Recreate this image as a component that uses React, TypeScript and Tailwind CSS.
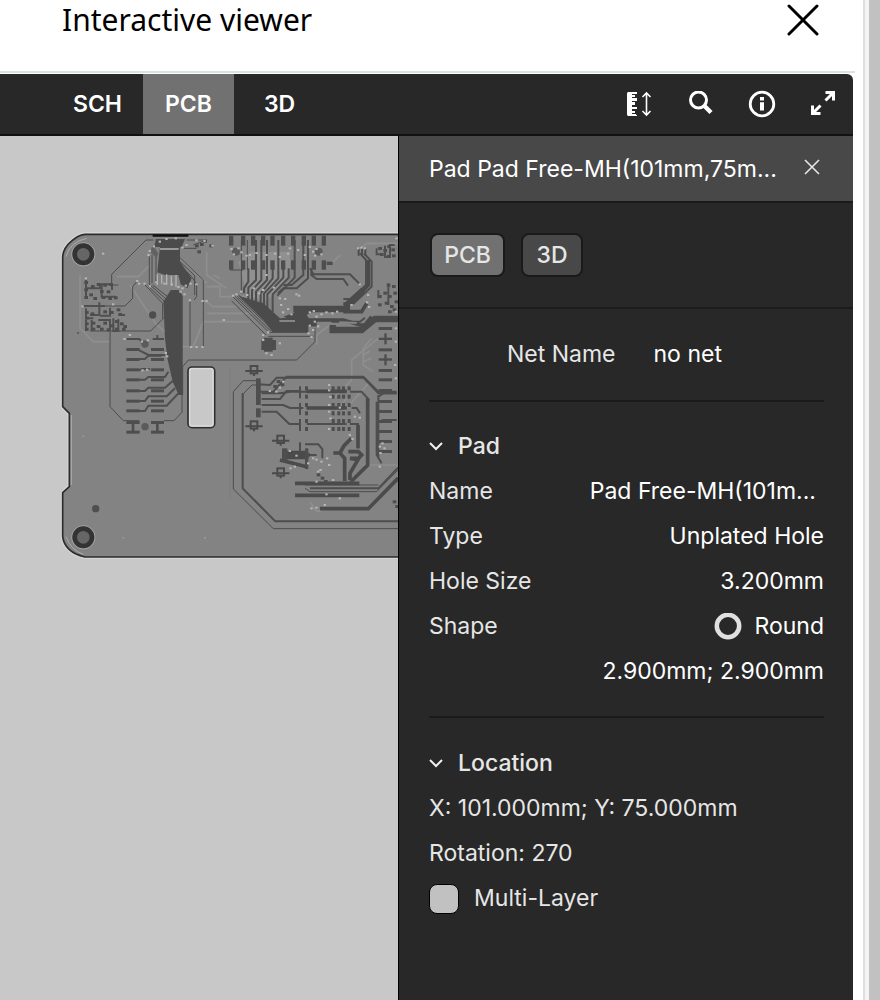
import type { ReactNode } from 'react';

type Point = [number, number];
type Box = [number, number, number, number];

const TABS = ['SCH', 'PCB', '3D'];

// Board units are a third of a pixel.
const THIN_TRACES = [
  'M310 45H288L185 148V180H205',
  'M262 168L248 185V220L225 243H165',
  'M120 318H302L345 275',
  'M180 320V545L220 587H268M342 587H372L396 562V500',
  'M298 95V180M306 90V175M318 95V170',
  'M285 180L338 235V280M293 182L342 228M300 180L348 222M308 180L354 216',
  'M380 110L425 155L440 178V215L432 225M384 104L434 152V210M388 96L460 165V365',
  'M420 228V365',
  'M398 510V425L415 405H740L795 350V310',
  'M410 45H460M395 70H440M430 60L470 45',
  'M548 215L655 320M553 212L662 318M560 212L668 314M566 210L676 310M545 228L648 330',
  'M655 322H775M655 334H790',
  'M550 792V500L580 467H625M578 792V508L606 480H625M550 792L670 911H1044',
  'M574 45V205M592 45V135M540 135H580',
  'M765 790L780 800H980L1044 735M765 780H985',
];

const TRACES = [
  'M578 504V790L676 889H1044',
  'M595 130V170L582 190V205M618 45V165L595 188V222M634 45V165L606 196V225M651 45V165L618 200V230M668 130V160L632 205V240M685 45V160L642 206V245M700 130V158L652 208V258M716 130V158L668 208V262M734 45V158L682 212',
  'M774 45V160L740 190H700L684 205M760 45V150L725 180H700M784 130V150L800 162H880L894 182M780 130L790 148H900L930 178',
  'M930 85L948 105V180L905 222H880M942 85L965 110V185L912 235H880',
  'M926 70V92M936 70V92M946 70V92',
  'M625 478L660 480L680 458H940L985 505H1040',
  'M625 500H670L710 455H940L985 500H1040',
  'M635 505H690L720 500H775M635 522H690L710 498H750M635 540H700L720 549H760M635 560H680L718 597H750',
  'M770 499H890M770 549H890M770 597H890M900 500H935L953 520V723L900 770M905 549H920L930 565M900 597H924V670',
  'M985 510V700M985 515L1000 505H1040M985 590L1000 585H1040M980 530V690L995 715',
  'M810 851H955L1044 758M780 790H985L1044 728',
  'M765 658H805L817 672V700M710 690H800',
  'M750 652V690',
  'M845 290H930L945 278',
  'M230 342H268L278 356M308 342H342M322 330V342',
  'M268 376L295 390H345M268 402H285L295 392H335',
  'M268 436L275 432H300M268 464H285L295 456H345L355 440',
  'M268 498H285L295 488H345L368 468M268 528H285L295 514H350L375 490M268 558H285L295 542H350L385 505',
];

const HEAVY_TRACES = [
  'M955 105V180L905 232',
  'M695 285H880L930 300H945L965 275',
  'M880 260H935L950 235',
  'M735 775H928M735 811H928',
  'M850 684H870L884 700V768M870 684L882 662L904 640M895 680H925L935 690L925 700H900L924 704L900 745V765',
  'M924 600V670',
  'M953 520V720L905 768',
  'M700 690H780M700 683H765M700 697H775M690 705L770 725',
  'M770 499H890M770 549H890',
  'M810 851H955L1044 760',
  'M625 468V540',
];

const BUSES = [
  'M730 252H900M885 245L940 195',
  'M690 295H800',
  'M848 300V315H935L975 282H1044',
];

const FAINT_TRACES = [
  'M200 155H265L300 120M240 180L320 300L345 320',
  'M470 185H510V215H620M460 225L490 245H560M470 265H650',
  'M390 365L430 365L460 290H600M380 90L470 175',
  'M985 340L905 405V465L850 520M965 340L940 370V410L965 400M960 378L940 390V420L970 440',
  'M90 150V310L130 350H180',
  'M470 80V150L530 190M490 150L510 160',
  'M930 70L950 55H1044M840 120L870 90',
  'M800 360V330L840 300M780 830L800 860L840 850',
  'M960 470L880 560M850 570L890 520M940 720H1044',
];

const CONNECTOR_X = [537, 573, 603, 633, 661, 693, 723, 755, 785, 815];

const PADS: Box[] = [
  ...CONNECTOR_X.map((x): Box => [x, 32, 13, 30]),
  ...CONNECTOR_X.map((x): Box => [x, 106, 13, 28]),
  ...[369, 399, 430, 460, 493, 524, 553].map((y): Box => [229, y, 40, 9]),
  ...[369, 399, 430, 460, 493, 524, 553].map((y): Box => [303, y, 39, 9]),
  ...[588, 617].map((y): Box => [229, y, 40, 9]),
  ...[588, 617].map((y): Box => [303, y, 39, 9]),
  [245, 596, 8, 22],
  [318, 596, 8, 22],
  ...[306, 370, 432, 460, 492, 525, 555, 585, 615, 645, 675].map((y): Box => [986, y, 40, 9]),
  [986, 338, 40, 7],
  [1003, 325, 7, 33],
  [986, 400, 40, 7],
  [1003, 388, 7, 33],
  [618, 460, 14, 80],
  [618, 550, 14, 27],
  [696, 670, 16, 40],
  [765, 670, 10, 62],
  [634, 345, 44, 30],
  [642, 338, 26, 42],
  [830, 110, 18, 10],
];

// Small two-pad parts in three rows.
const PART_COLUMNS = [765, 845, 862, 876, 893];
const PARTS: Point[] = [484, 509, 534, 559, 582, 606].flatMap((y) => PART_COLUMNS.map((x): Point => [x, y]));

const CHIPS: Point[] = [
  [103, 168], [123, 180], [140, 174], [160, 176], [178, 174], [103, 190], [118, 205],
  [103, 213], [130, 216], [150, 195], [155, 213], [175, 216], [192, 214], [170, 196],
  [105, 258], [122, 262], [160, 256], [180, 258], [200, 250], [205, 264], [105, 275],
  [105, 292], [125, 290], [140, 300], [160, 290], [178, 298], [195, 285], [210, 292],
  [220, 300], [105, 308], [125, 308], [150, 308], [170, 310], [195, 308], [216, 308],
  [435, 58], [450, 54], [478, 58], [442, 76], [460, 44],
  [985, 66], [1000, 72], [1012, 60], [1024, 70], [990, 84], [1010, 90], [1026, 88],
  [1010, 176], [1026, 180], [984, 210], [1000, 200], [1014, 210], [1030, 200],
  [984, 235], [1004, 230], [1020, 240], [1034, 226], [1014, 256], [1028, 250],
  [800, 745], [812, 755], [822, 765], [1028, 826], [1036, 840], [680, 465], [670, 480], [692, 475],
];

const CHIP_LINES =
  'M108 165V190H150V178H186V195M155 180V215H195V222M108 195V220M100 243H165M148 232V270H120M180 248V272H150M108 250V280H130M108 285V318M125 285V318M145 285H180V318M190 280V318H205V282M210 270H225M980 70V88H1000M1005 62V96H1020V60H1034M985 195V220M1015 175V240';

const TEST_POINTS: Point[] = [[612, 435], [612, 601], [692, 644], [692, 742]];

const VIAS: Point[] = [
  [160, 86], [296, 90], [300, 78], [312, 64], [108, 160], [98, 244], [190, 238], [262, 168], [268, 176],
  [284, 176], [300, 184], [320, 172], [344, 176], [366, 178], [386, 186], [398, 190], [408, 182], [422, 176],
  [392, 200], [404, 208], [440, 178], [420, 226], [458, 228], [470, 228], [424, 366], [440, 366], [458, 366],
  [398, 68], [410, 60], [440, 46], [464, 48], [488, 62], [350, 42], [330, 50], [378, 40], [224, 342],
  [240, 330], [276, 350], [294, 346], [278, 436], [292, 434], [348, 384], [352, 394], [522, 285],
  [545, 72], [552, 88], [566, 70], [575, 82], [590, 92], [550, 212], [560, 208], [574, 200], [592, 210],
  [612, 190], [628, 205], [640, 195], [600, 90], [620, 84], [650, 90], [676, 86], [690, 96], [715, 86],
  [720, 70], [745, 75], [765, 90], [790, 80], [800, 72], [815, 88], [796, 92], [780, 66], [650, 150],
  [672, 188], [690, 220], [694, 240], [700, 262], [715, 252], [725, 268], [748, 212], [740, 208], [706, 222],
  [925, 70], [935, 68], [945, 70], [930, 178], [905, 240], [955, 210], [952, 232], [958, 246],
  [780, 262], [792, 258], [800, 275], [815, 268], [830, 262], [848, 265], [862, 260], [795, 290],
  [780, 302], [790, 315], [776, 325], [785, 336], [805, 304], [640, 330], [655, 322], [650, 385],
  [665, 390], [640, 345], [690, 355], [660, 498], [680, 500], [690, 488], [700, 470], [838, 480], [838, 496],
  [842, 516], [838, 540], [838, 560], [842, 580], [838, 612], [870, 548], [915, 575], [930, 578], [900, 630],
  [908, 642], [720, 678], [740, 692], [722, 730], [735, 725], [775, 715], [790, 700], [800, 704], [815, 710],
  [832, 700], [838, 720], [805, 740], [812, 735], [800, 770], [850, 765], [870, 820], [830, 808], [785, 850],
  [800, 848], [825, 840], [990, 725], [998, 655], [1004, 670], [992, 684], [990, 665], [1040, 40],
  [1038, 260], [1038, 310], [1038, 350], [1036, 420], [1038, 460],
];

function BoardDrawing() {
  return (
    <svg
      viewBox="30 21 1014 984"
      className="mt-24 ml-[60px] h-[328px] w-[338px] shrink-0"
      fill="none"
      role="img"
      aria-label="PCB layout"
    >
      <path
        d="M1060 28H105Q88 28 66 47Q38 70 38 98V545L58 565V785L38 803V935Q44 982 105 996H1060Z"
        fill="#838383"
        stroke="#d6d6d6"
        strokeWidth="12"
      />
      <path
        d="M1060 28H105Q88 28 66 47Q38 70 38 98V545L58 565V785L38 803V935Q44 982 105 996H1060Z"
        fill="#838383"
        stroke="#2c2c2c"
        strokeWidth="5"
      />
      <path d="M64 570V780M110 40Q60 50 48 95M48 935Q62 975 100 988" stroke="#adadad" strokeWidth="3" />
      <path d="M308 32H415" stroke="#111" strokeWidth="7" />

      <path d="M540 430V820" stroke="#7b7b7b" strokeWidth="3" />
      <g stroke="#8f8f8f" strokeWidth="5">
        {FAINT_TRACES.map((d) => (
          <path key={d} d={d} />
        ))}
      </g>
      <path d="M565 110L605 80L720 80V150L670 210L640 230L590 205Z" fill="#9a9a9a" opacity="0.6" />

      <g stroke="#4c4c4c" strokeWidth="3">
        {THIN_TRACES.map((d) => (
          <path key={d} d={d} />
        ))}
      </g>
      <g stroke="#4e4e4e" strokeWidth="6">
        {TRACES.map((d) => (
          <path key={d} d={d} />
        ))}
      </g>
      <g stroke="#4b4b4b" strokeWidth="11">
        {HEAVY_TRACES.map((d) => (
          <path key={d} d={d} />
        ))}
      </g>
      <g stroke="#4b4b4b" strokeWidth="19">
        {BUSES.map((d) => (
          <path key={d} d={d} />
        ))}
      </g>

      {/* ribbon bundles that read as solid copper */}
      <g fill="#4b4b4b">
        <path d="M330 65H390V110L425 160L412 190L392 178L385 150H345L322 142Z" />
        <path d="M318 42H405L395 66H312Z" />
        <path d="M340 230L362 195H386L398 212V510H386L368 470L352 400L345 340Z" />
        <path d="M565 212L640 235L690 280H740V292H775V322H668L640 285Z" />
        <path d="M730 245H860V262L790 258L770 270L780 285H725L700 275L735 262Z" />
      </g>
      <path d="M308 60L325 85L320 100L300 80Z" fill="#626262" />
      <path
        d="M322 148V180M335 150V176M350 148V180M364 152V182M378 150V186M330 72H386"
        stroke="#b4b4b4"
        strokeWidth="4"
      />
      <path d="M688 288H735M785 270L845 266M868 292L920 294" stroke="#858585" strokeWidth="6" />

      <path d={CHIP_LINES} stroke="#505050" strokeWidth="6" />
      <g fill="#4e4e4e">
        {PADS.map(([x, y, w, h]) => (
          <rect key={`${x}-${y}`} x={x} y={y} width={w} height={h} />
        ))}
        {PARTS.map(([x, y]) => (
          <rect key={`${x}-${y}`} x={x} y={y} width="9" height="12" />
        ))}
        {[484, 534, 582].map((y) => (
          <rect key={y} x="747" y={y} width="6" height="36" />
        ))}
        {CHIPS.map(([x, y]) => (
          <rect key={`${x}-${y}`} x={x} y={y} width="11" height="9" />
        ))}
        <circle cx="308" cy="270" r="11" />
        <circle cx="137" cy="851" r="11" />
        <circle cx="84" cy="324" r="3" />
      </g>
      <circle cx="285" cy="357" r="11" fill="#5b5b5b" />
      <circle cx="285" cy="605" r="11" fill="#5b5b5b" />
      <circle cx="558" cy="80" r="12" fill="#5b5b5b" />
      <circle cx="806" cy="80" r="12" fill="#5b5b5b" />

      <g stroke="#4a4a4a" strokeWidth="6">
        {TEST_POINTS.map(([x, y]) => (
          <g key={`${x}-${y}`}>
            <rect x={x - 10} y={y - 12} width="20" height="22" />
            <path d={`M${x - 26} ${y + 3}H${x + 26}M${x} ${y + 10}V${y + 18}`} />
          </g>
        ))}
      </g>

      <g fill="#b6b6b6">
        {VIAS.map(([x, y]) => (
          <rect key={`${x}-${y}`} x={x - 4} y={y - 3} width="7" height="6" />
        ))}
      </g>
      <g fill="#9c9c9c">
        <circle cx="100" cy="634" r="3" />
        <circle cx="220" cy="938" r="3" />
        <circle cx="465" cy="938" r="3" />
      </g>

      <rect x="414" y="426" width="80" height="182" rx="12" fill="#c8c8c8" stroke="#303030" strokeWidth="5" />
      <rect x="419" y="431" width="70" height="172" rx="8" stroke="#dadada" strokeWidth="4" />

      {[88, 937].map((cy) => (
        <g key={cy}>
          <circle cx="100" cy={cy} r="35" stroke="#a5a5a5" strokeWidth="3" />
          <circle cx="100" cy={cy} r="26" fill="#666" stroke="#333" strokeWidth="14" />
        </g>
      ))}
    </svg>
  );
}

function RulerIcon() {
  return (
    <svg width="26" height="26" viewBox="0 0 26 26" fill="none">
      <path d="M2 1H11V2H6V4H9V6H6V8H11V10H6V12H9V14H6V16H11V18H6V20H9V22H6V24H11V25H2L1 24V2Z" fill="#fff" />
      <path d="M5 1H11V3H5ZM5 7H11V9H5ZM5 11H9V13H5ZM5 16H11V18H5ZM5 23H10V25H5Z" fill="#fff" />
      <path d="M20.5 2V24M16.5 6L20.5 2L24.5 6M16.5 20L20.5 24L24.5 20" stroke="#fff" strokeWidth="1.6" />
    </svg>
  );
}

function SearchIcon() {
  return (
    <svg width="26" height="26" viewBox="0 0 26 26" fill="none" stroke="#fff">
      <circle cx="11.5" cy="9" r="8" strokeWidth="3" />
      <path d="M17 14.5L24 21.5" strokeWidth="4.4" />
    </svg>
  );
}

function InfoIcon() {
  return (
    <svg width="28" height="28" viewBox="0 0 28 28" fill="none">
      <circle cx="14" cy="14" r="11.8" stroke="#fff" strokeWidth="2.8" />
      <path d="M12 7H16V10.4H12ZM12 12.2H16V20.6H12Z" fill="#fff" />
    </svg>
  );
}

function ExpandIcon() {
  return (
    <svg width="26" height="26" viewBox="0 0 26 26" fill="none" stroke="#fff" strokeWidth="3">
      <path d="M14.5 1.5H22.5V9.5M22 2L14.5 9.5M1.5 14.5V22.5H9.5M2 22L9.5 14.5" />
    </svg>
  );
}

function Row({ label, children }: { label?: string; children: ReactNode }) {
  return (
    <div className="flex h-[45px] items-center justify-between">
      <dt>{label}</dt>
      <dd className="flex items-center text-white">{children}</dd>
    </div>
  );
}

function SectionTitle({ children }: { children: ReactNode }) {
  return (
    <h3 className="h-[45px] font-medium">
      <button className="flex h-full items-center gap-[15px]" aria-expanded="true">
        <svg width="14" height="10" viewBox="0 0 14 10" fill="none" stroke="#f0f0f0" strokeWidth="2">
          <path d="M1 1L7 7L13 1" />
        </svg>
        {children}
      </button>
    </h3>
  );
}

function DetailsPanel() {
  return (
    <aside className="flex w-[455px] shrink-0 flex-col border-l border-black bg-[#282828] text-[23px] text-[#e6e6e6]">
      <header className="flex h-[67px] items-center justify-between border-b-2 border-[#1a1a1a] bg-[#484848] pr-[33px] pl-[30px]">
        <h2 className="pt-0.5 whitespace-nowrap text-white">Pad Pad Free-MH(101mm,75m...</h2>
        <button aria-label="Close panel" className="pb-1">
          <svg width="16" height="16" viewBox="0 0 16 16" stroke="#e6e6e6" strokeWidth="1.6">
            <path d="M1 1L15 15M15 1L1 15" />
          </svg>
        </button>
      </header>

      <div className="flex h-[106px] items-center gap-4 border-b-2 border-[#1c1c1c] px-[31px] font-medium">
        <button className="h-11 w-[75px] rounded-lg border-2 border-[#1a1a1a] bg-[#717171]">PCB</button>
        <button className="h-11 w-[62px] rounded-lg border-2 border-[#1a1a1a] bg-[#484848]">3D</button>
      </div>

      <div className="pr-[29px] pl-[30px]">
        <dl className="flex h-[91px] items-center gap-[38px] pl-[78px]">
          <dt>Net Name</dt>
          <dd className="text-white">no net</dd>
        </dl>

        <section className="border-y-2 border-[#1a1a1a] py-[22px]">
          <SectionTitle>Pad</SectionTitle>
          <dl>
            <Row label="Name">
              <span className="pr-2 whitespace-nowrap">Pad Free-MH(101m...</span>
            </Row>
            <Row label="Type">Unplated Hole</Row>
            <Row label="Hole Size">3.200mm</Row>
            <Row label="Shape">
              <svg className="mr-3" width="28" height="28" viewBox="0 0 28 28" fill="none">
                <circle cx="14" cy="13" r="11.2" stroke="#e0e0e0" strokeWidth="4.5" />
              </svg>
              Round
            </Row>
            <Row>2.900mm; 2.900mm</Row>
          </dl>
        </section>

        <section className="pt-[23px]">
          <SectionTitle>Location</SectionTitle>
          <p className="flex h-[45px] items-center">X: 101.000mm; Y: 75.000mm</p>
          <p className="flex h-[45px] items-center">Rotation: 270</p>
          <p className="flex h-[45px] items-center gap-[15px]">
            <span className="size-[30px] rounded-lg border border-black bg-[#c1c1c1]" />
            Multi-Layer
          </p>
        </section>
      </div>
    </aside>
  );
}

export default function App() {
  return (
    <div className="flex min-h-screen bg-[#c1c1c1] pr-[11px] font-['Inter',sans-serif]">
      <div className="flex flex-1 border-r-4 border-[#f4f4f4]">
        <main className="flex flex-1 flex-col border-r-2 border-[#dedede] bg-white pr-2">
          <header className="flex h-[73px] justify-between border-b-2 border-[#dbe3df] pr-9 pl-[62px]">
            <h1 className="font-['Noto_Sans',sans-serif] text-[30px] leading-10 text-black">Interactive viewer</h1>
            <button aria-label="Close" className="h-10">
              <svg width="32" height="32" viewBox="0 0 32 32" stroke="#000" strokeWidth="3" strokeLinecap="round">
                <path d="M2 2L30 30M30 2L2 30" />
              </svg>
            </button>
          </header>

          <div className="mt-px mr-0.5 flex flex-1 flex-col overflow-hidden rounded-tr-md">
            <div className="flex h-[62px] items-stretch justify-between border-b-2 border-[#111] bg-[#282828] pr-4 pl-[52px]">
              <nav className="flex text-[23px] font-semibold text-white">
                {TABS.map((tab) => (
                  <button key={tab} className={tab === 'PCB' ? 'w-[91px] bg-[#717171]' : 'w-[91px]'}>
                    {tab}
                  </button>
                ))}
              </nav>
              <div className="flex items-center gap-[35px]">
                <button aria-label="Measure"><RulerIcon /></button>
                <button aria-label="Search"><SearchIcon /></button>
                <button aria-label="Info"><InfoIcon /></button>
                <button aria-label="Full screen"><ExpandIcon /></button>
              </div>
            </div>

            <div className="flex flex-1">
              <div className="flex min-w-0 flex-1 items-start overflow-hidden bg-[#c8c8c8]">
                <BoardDrawing />
              </div>
              <DetailsPanel />
            </div>
          </div>
        </main>
      </div>
    </div>
  );
}
